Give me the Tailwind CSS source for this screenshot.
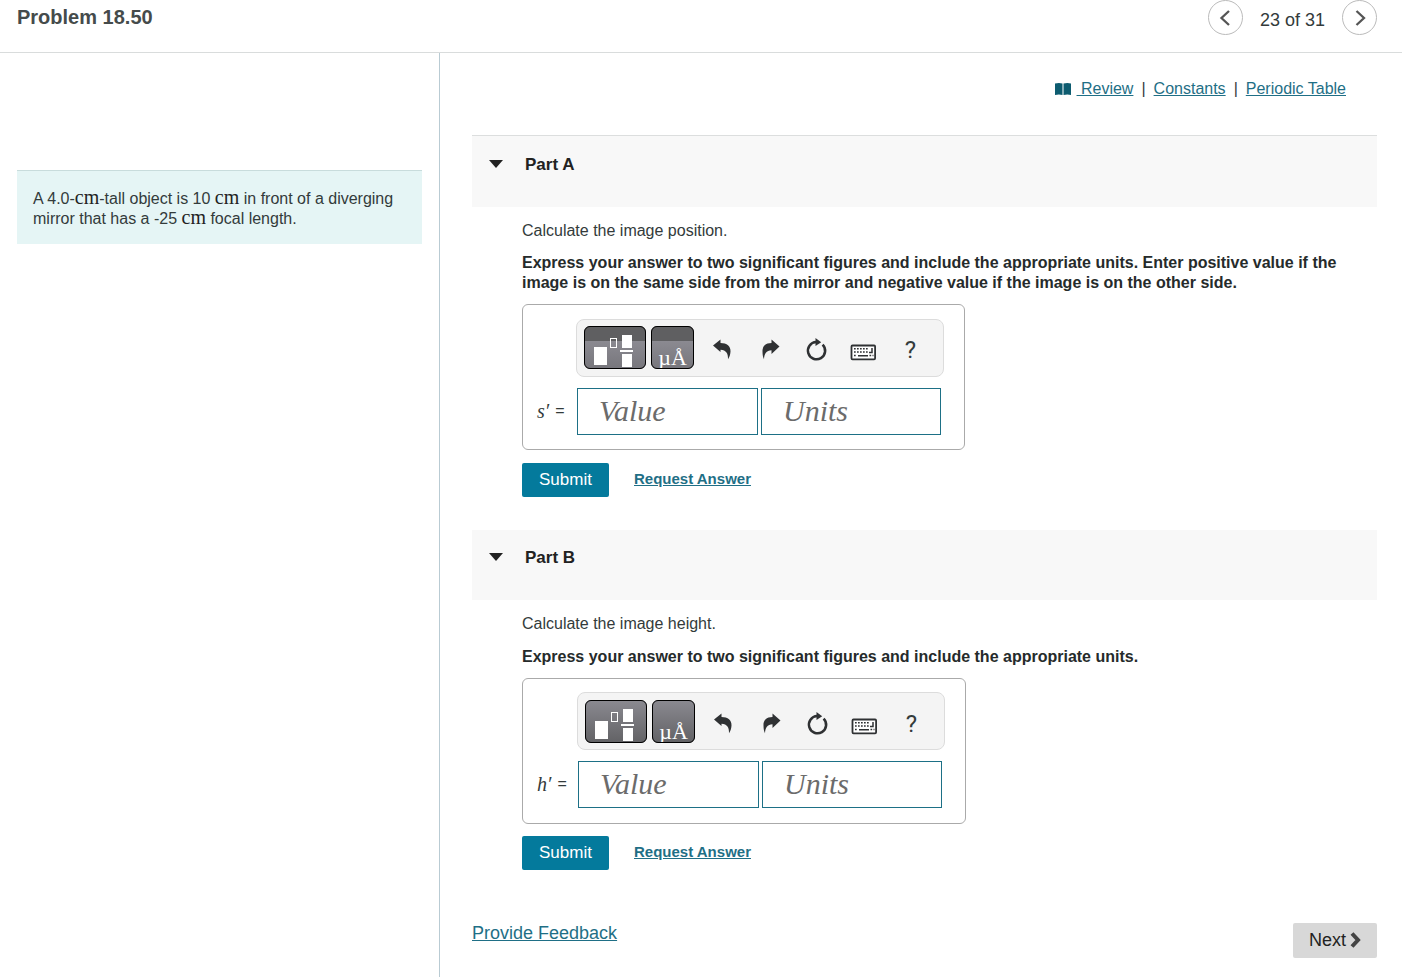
<!DOCTYPE html>
<html lang="en">
<head>
    <meta charset="UTF-8">
    <meta name="viewport" content="width=device-width, initial-scale=1.0">
    <title>Problem 18.50</title>
    <script src="https://cdn.jsdelivr.net/npm/@tailwindcss/browser@4"></script>
</head>
<body class="min-h-screen flex flex-col bg-white text-base leading-5 text-[#333b3b] font-['Liberation_Sans',Arial,sans-serif]">
    <!-- Shared icons -->
    <svg class="hidden">
        <symbol id="undo" viewBox="0 0 47 43">
            <path d="M14 19.500 21.500 13.500v3.600c6.500 0 10.300 3.400 10 8.400-.2 3-1 5.500-2.500 7.700.3-5.700-1.800-9.200-7.500-9.500v2.300z" fill="#2f3133"/>
        </symbol>
        <symbol id="redo" viewBox="0 0 47 43">
            <path d="M33.500 20.500 25.500 13.500v3.600c-6 0-9.300 3.400-9 8.400 0 3 .4 5.500 1.500 7.700.3-5.700 2.300-8.600 7.500-8.900v3.700z" fill="#2f3133"/>
        </symbol>
        <symbol id="reset" viewBox="0 0 47 43">
            <path d="M29.600 18.600a8.600 8.600 0 1 1-6.500-2.500" fill="none" stroke="#2f3133" stroke-width="2.500"/>
            <path d="M22.500 12v8l5.700-3.800z" fill="#2f3133"/>
        </symbol>
        <symbol id="keyboard" viewBox="0 0 47 43">
            <rect x="11.500" y="19.500" width="23.600" height="13.800" rx="1" fill="#fff" stroke="#2f3133" stroke-width="1.800"/>
            <path d="M14 22.800h15M14 26h15M14 29.500h3M29.500 29.500h4" stroke="#2f3133" stroke-width="1.500" stroke-dasharray="1.700 1.300"/>
            <path d="M18 29.700h10M32 22v4.500h-3" fill="none" stroke="#2f3133" stroke-width="1.500"/>
        </symbol>
        <symbol id="templates" viewBox="0 0 62 43">
            <g fill="#fff">
                <rect x="10" y="21" width="13" height="18"/>
                <rect x="38" y="9" width="10" height="13"/>
                <rect x="36" y="24" width="13" height="2"/>
                <rect x="38" y="28" width="10" height="13"/>
            </g>
            <rect x="26.500" y="12.500" width="6" height="9" fill="none" stroke="#fff"/>
        </symbol>
    </svg>

    <header class="flex justify-between h-[53px] border-b border-[#d9dcdc] pl-[17px] pr-[25px]">
        <h1 class="text-xl leading-[34px] font-bold text-[#454b4b]">Problem 18.50</h1>
        <nav class="flex items-start gap-[17px] text-lg">
            <button aria-label="Previous" class="size-[35px] rounded-full border border-[#bbb] flex items-center justify-center">
                <svg class="w-3 h-4" viewBox="0 0 12 16" fill="none" stroke="#555" stroke-width="2.300"><path d="M10 1 2.500 8l7.500 7"/></svg>
            </button>
            <span class="leading-10">23 of 31</span>
            <button aria-label="Next problem" class="size-[35px] rounded-full border border-[#bbb] flex items-center justify-center">
                <svg class="w-3 h-4" viewBox="0 0 12 16" fill="none" stroke="#555" stroke-width="2.300"><path d="M2.500 1 10 8l-7.500 7"/></svg>
            </button>
        </nav>
    </header>

    <div class="flex grow">
        <aside class="w-[440px] shrink-0 border-r border-[#b9cbd3] px-[17px] pt-[117px]">
            <p class="bg-[#e5f5f5] border-t border-[#c8dcdc] pl-4 pr-2 pt-[18px] pb-[15px]">A 4.0-<span class="text-xl/4 text-[#222] font-['Liberation_Serif',serif]">cm</span>-tall object is 10 <span class="text-xl/4 text-[#222] font-['Liberation_Serif',serif]">cm</span> in front of a diverging mirror that has a -25 <span class="text-xl/4 text-[#222] font-['Liberation_Serif',serif]">cm</span> focal length.</p>
        </aside>

        <main class="grow min-w-0 pl-8 pr-[25px] pt-[26px] pb-[18px]">
            <div class="flex justify-end items-center gap-2 pr-[31px] text-[#1f6f86]">
                <a href="#" class="flex items-center">
                    <svg class="w-4 h-3 mr-[6px]" viewBox="0 0 16 12" fill="#0d5c70"><path d="M0 .5q4-1 7.500 0v11.500q-3.500-1-7.500 0zM8.500 .5q4-1 7.500 0v11.500q-3.500-1-7.500 0z"/></svg>
                    <span class="underline">&nbsp;Review</span>
                </a>
                <span class="text-[#333b3b]">|</span>
                <a href="#" class="underline">Constants</a>
                <span class="text-[#333b3b]">|</span>
                <a href="#" class="underline">Periodic Table</a>
            </div>

            <!-- Part A -->
            <section class="mt-9">
                <h2 class="flex items-start gap-[22px] h-[72px] bg-[#f8f8f8] border-t border-[#dcdede] pl-[17px] pt-[19px] text-[17px] font-bold text-[#222]">
                    <svg class="w-[14px] h-2 mt-[5px]" viewBox="0 0 14 8" fill="#222"><path d="M0 0h14L7 8z"/></svg>
                    Part A
                </h2>
                <div class="pl-[50px] pt-[14px]">
                    <p>Calculate the image position.</p>
                    <p class="mt-3 font-bold text-[#262b2b]">Express your answer to two significant figures and include the appropriate units. Enter positive value if the image is on the same side from the mirror and negative value if the image is on the other side.</p>
                    <div class="mt-[11px] w-fit border border-[#aaa] rounded-md pl-[14px] pr-5 py-[14px]">
                        <div class="ml-[39px] flex items-start h-[58px] w-[368px] bg-[#f4f4f4] border border-[#dcdcdc] rounded-lg pl-[7px] pt-[6px]">
                            <button aria-label="Templates" class="w-[62px] h-[43px] rounded-md outline outline-black -outline-offset-1 bg-linear-to-b from-[#5f5f61] from-35% via-[#8b8a91] via-35% to-[#77767c]"><svg class="w-[62px] h-[43px]"><use href="#templates"/></svg></button>
                            <button aria-label="Symbols" class="ml-[5px] mr-[5px] w-[43px] h-[43px] rounded-md outline outline-black -outline-offset-1 bg-linear-to-b from-[#5f5f61] from-35% via-[#8b8a91] via-35% to-[#77767c] pt-5 text-[22px] leading-6 text-white font-['Liberation_Serif',serif]">µÅ</button>
                            <button aria-label="Undo"><svg class="w-[47px] h-[43px]"><use href="#undo"/></svg></button>
                            <button aria-label="Redo"><svg class="w-[47px] h-[43px]"><use href="#redo"/></svg></button>
                            <button aria-label="Reset"><svg class="w-[47px] h-[43px]"><use href="#reset"/></svg></button>
                            <button aria-label="Keyboard shortcuts"><svg class="w-[47px] h-[43px]"><use href="#keyboard"/></svg></button>
                            <button aria-label="Help" class="w-[47px] h-[43px] pt-1 text-2xl font-[Roboto,sans-serif]">?</button>
                        </div>
                        <div class="mt-[11px] flex items-center">
                            <label for="valueA" class="w-10 flex items-center gap-[6px] pb-px"><i class="text-xl leading-5 font-['Liberation_Serif',serif]">s′</i> =</label>
                            <input id="valueA" type="text" placeholder="Value" class="w-[181px] h-[47px] border border-[#1d7086] pl-[21px] pb-[2px] text-3xl italic placeholder:text-[#6b6b6b] font-['Liberation_Serif',serif]">
                            <input type="text" aria-label="Units" placeholder="Units" class="ml-[3px] w-[180px] h-[47px] border border-[#1d7086] pl-[21px] pb-[2px] text-3xl italic placeholder:text-[#6b6b6b] font-['Liberation_Serif',serif]">
                        </div>
                    </div>
                    <div class="mt-[13px] flex items-center gap-[25px]">
                        <button class="w-[87px] h-[34px] rounded-xs bg-[#047a9c] pb-px text-[17px] leading-5 text-white">Submit</button>
                        <a href="#" class="pb-[2px] text-[15px] font-bold underline text-[#1f6f86]">Request Answer</a>
                    </div>
                </div>
            </section>

            <!-- Part B -->
            <section class="mt-[33px]">
                <h2 class="flex items-start gap-[22px] h-[70px] bg-[#f8f8f8] pl-[17px] pt-[18px] text-[17px] font-bold text-[#222]">
                    <svg class="w-[14px] h-2 mt-[5px]" viewBox="0 0 14 8" fill="#222"><path d="M0 0h14L7 8z"/></svg>
                    Part B
                </h2>
                <div class="pl-[50px] pt-[14px]">
                    <p>Calculate the image height.</p>
                    <p class="mt-[13px] font-bold text-[#262b2b]">Express your answer to two significant figures and include the appropriate units.</p>
                    <div class="mt-[11px] w-fit border border-[#aaa] rounded-md pl-[14px] pr-5 pt-[13px] pb-[15px]">
                        <div class="ml-10 flex items-start h-[58px] w-[368px] bg-[#f4f4f4] border border-[#dcdcdc] rounded-lg pl-[7px] pt-[7px]">
                            <button aria-label="Templates" class="w-[62px] h-[43px] rounded-md outline outline-black -outline-offset-1 bg-linear-to-b from-[#8b8a91] to-[#626265]"><svg class="w-[62px] h-[43px]"><use href="#templates"/></svg></button>
                            <button aria-label="Symbols" class="ml-[5px] mr-[5px] w-[43px] h-[43px] rounded-md outline outline-black -outline-offset-1 bg-linear-to-b from-[#8b8a91] to-[#626265] pt-5 text-[22px] leading-6 text-white font-['Liberation_Serif',serif]">µÅ</button>
                            <button aria-label="Undo"><svg class="w-[47px] h-[43px]"><use href="#undo"/></svg></button>
                            <button aria-label="Redo"><svg class="w-[47px] h-[43px]"><use href="#redo"/></svg></button>
                            <button aria-label="Reset"><svg class="w-[47px] h-[43px]"><use href="#reset"/></svg></button>
                            <button aria-label="Keyboard shortcuts"><svg class="w-[47px] h-[43px]"><use href="#keyboard"/></svg></button>
                            <button aria-label="Help" class="w-[47px] h-[43px] pt-1 text-2xl font-[Roboto,sans-serif]">?</button>
                        </div>
                        <div class="mt-[11px] flex items-center">
                            <label for="valueB" class="w-[41px] flex items-center gap-[6px] pb-px"><i class="text-xl leading-5 font-['Liberation_Serif',serif]">h′</i> =</label>
                            <input id="valueB" type="text" placeholder="Value" class="w-[181px] h-[47px] border border-[#1d7086] pl-[21px] pb-[2px] text-3xl italic placeholder:text-[#6b6b6b] font-['Liberation_Serif',serif]">
                            <input type="text" aria-label="Units" placeholder="Units" class="ml-[3px] w-[180px] h-[47px] border border-[#1d7086] pl-[21px] pb-[2px] text-3xl italic placeholder:text-[#6b6b6b] font-['Liberation_Serif',serif]">
                        </div>
                    </div>
                    <div class="mt-3 flex items-center gap-[25px]">
                        <button class="w-[87px] h-[34px] rounded-xs bg-[#047a9c] pb-px text-[17px] leading-5 text-white">Submit</button>
                        <a href="#" class="pb-[2px] text-[15px] font-bold underline text-[#1f6f86]">Request Answer</a>
                    </div>
                </div>
            </section>

            <footer class="mt-[53px] flex justify-between items-start text-lg leading-5">
                <a href="#" class="underline text-[#1f6f86]">Provide Feedback</a>
                <button class="flex items-center gap-1 h-[35px] px-4 pb-[2px] rounded-xs bg-[#d8d8d8] text-[#222]">
                    Next
                    <svg class="w-[11px] h-4" viewBox="0 0 11 16" fill="none" stroke="#444" stroke-width="4"><path d="M2 1.500 8 8l-6 6.500"/></svg>
                </button>
            </footer>
        </main>
    </div>
</body>
</html>
